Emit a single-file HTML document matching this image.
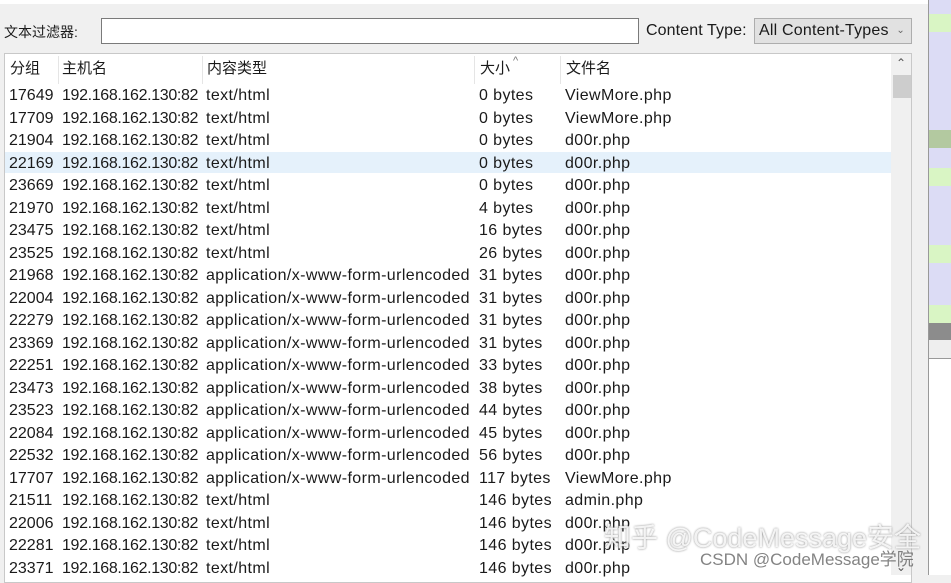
<!DOCTYPE html><html><head><meta charset="utf-8"><style>
body{margin:0;width:951px;height:575px;overflow:hidden;background:#f0f0f0;font-family:"Liberation Sans","Noto Sans CJK SC",sans-serif;position:relative;color:#1a1a1a}
.a{position:absolute}
.row{position:absolute;left:5px;width:886px;height:22.5px;font-size:16px;line-height:22px;letter-spacing:.4px}
.row span{position:absolute;white-space:nowrap}
</style></head><body>
<div class="a" style="left:0;top:0;width:928px;height:4px;background:#fff"></div>
<div class="a" style="left:4px;top:22px;font-size:14px">文本过滤器:</div>
<div class="a" style="left:101px;top:18px;width:536px;height:24px;background:#fff;border:1px solid #7a7a7a"></div>
<div class="a" style="left:646px;top:22px;font-size:16px;letter-spacing:.1px">Content Type:</div>
<div class="a" style="left:754px;top:18px;width:158px;height:26px;background:#e1e1e1;border:1px solid #adadad;box-sizing:border-box;font-size:16px;letter-spacing:.2px;line-height:24px;padding-left:4px">All Content-Types<span style="position:absolute;right:6px;top:0;font-size:10px;color:#666">&#8964;</span></div>
<div class="a" style="left:4px;top:53px;width:908px;height:530px;background:#fff;border:1px solid #c8c8c8;box-sizing:border-box"></div>
<div class="a" style="left:891px;top:54px;width:20px;height:521px;background:#f0f0f0"></div>
<div class="a" style="left:893px;top:75px;width:18px;height:23px;background:#cdcdcd"></div>
<div class="a" style="left:896px;top:56px;font-size:12px;color:#555">&#8963;</div>
<div class="a" style="left:896px;top:560px;font-size:12px;color:#555">&#8964;</div>
<div class="a" style="left:5px;top:152px;width:886px;height:21px;background:#e5f1fb"></div>
<div class="row" style="top:58px;letter-spacing:0;font-size:15px"><span style="left:5px">分组</span><span style="left:57px">主机名</span><span style="left:202px">内容类型</span><span style="left:475px">大小</span><span style="left:561px">文件名</span><span style="left:508px;top:-8px;font-size:11px;color:#777">^</span></div>
<div class="a" style="left:58px;top:56px;width:1px;height:28px;background:#e5e5e5"></div>
<div class="a" style="left:202px;top:56px;width:1px;height:28px;background:#e5e5e5"></div>
<div class="a" style="left:474px;top:56px;width:1px;height:28px;background:#e5e5e5"></div>
<div class="a" style="left:560px;top:56px;width:1px;height:28px;background:#e5e5e5"></div>
<div id="rows"></div>
<div class="a" style="left:928px;top:0;width:23px;height:575px;background:#fff;border-left:1px solid #999"></div>
<div class="a" style="left:929px;top:0;width:22px;height:340px;background:#dcdcf5"></div>
<div class="a" style="left:929px;top:14px;width:22px;height:18px;background:#d9f5c4"></div>
<div class="a" style="left:929px;top:130px;width:22px;height:18px;background:#b3c9a0"></div>
<div class="a" style="left:929px;top:168px;width:22px;height:18px;background:#d9f5c4"></div>
<div class="a" style="left:929px;top:245px;width:22px;height:18px;background:#d9f5c4"></div>
<div class="a" style="left:929px;top:305px;width:22px;height:18px;background:#d9f5c4"></div>
<div class="a" style="left:929px;top:323px;width:22px;height:17px;background:#8c8c8c"></div>
<div class="a" style="left:929px;top:340px;width:22px;height:18px;background:#eeeeee;border-bottom:1px solid #999"></div>
<div class="a" style="left:604px;top:516px;font-size:27px;color:rgba(255,255,255,.85);text-shadow:0 0 2px #888">知乎 @CodeMessage安全</div>
<div class="a" style="left:700px;top:545px;font-size:17px;color:rgba(90,90,90,.75)">CSDN @CodeMessage学院</div>
<script>
var d=[["17649","text/html","0 bytes","ViewMore.php"],["17709","text/html","0 bytes","ViewMore.php"],["21904","text/html","0 bytes","d00r.php"],["22169","text/html","0 bytes","d00r.php"],["23669","text/html","0 bytes","d00r.php"],["21970","text/html","4 bytes","d00r.php"],["23475","text/html","16 bytes","d00r.php"],["23525","text/html","26 bytes","d00r.php"]];
var f="application/x-www-form-urlencoded";
[["21968","31"],["22004","31"],["22279","31"],["23369","31"],["22251","33"],["23473","38"],["23523","44"],["22084","45"],["22532","56"]].forEach(function(x){d.push([x[0],f,x[1]+" bytes","d00r.php"])});
d.push(["17707",f,"117 bytes","ViewMore.php"],["21511","text/html","146 bytes","admin.php"],["22006","text/html","146 bytes","d00r.php"],["22281","text/html","146 bytes","d00r.php"],["23371","text/html","146 bytes","d00r.php"]);
var h="";d.forEach(function(r,i){h+='<div class="row" style="top:'+(85+i*22.5)+'px"><span style="left:4px;letter-spacing:0">'+r[0]+'</span><span style="left:57px;letter-spacing:-.35px">192.168.162.130:82</span><span style="left:201px">'+r[1]+'</span><span style="left:474px">'+r[2]+'</span><span style="left:560px">'+r[3]+'</span></div>'});
document.getElementById("rows").innerHTML=h;
</script>
</body></html>
